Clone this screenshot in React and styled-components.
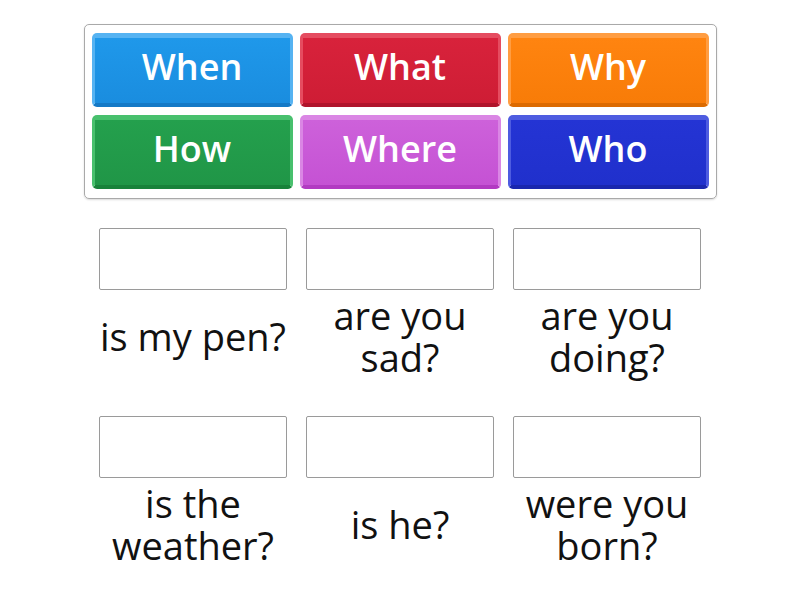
import React from "react";
import styled, { createGlobalStyle } from "styled-components";

const Global = createGlobalStyle`
  html, body { margin: 0; padding: 0; background: #fff; }
  body { font-family: "Open Sans", "Noto Sans", sans-serif; }
`;

const Page = styled.div`
  width: 800px;
  height: 600px;
  display: flex;
  flex-direction: column;
  align-items: center;
  padding-top: 24px;
  box-sizing: border-box;
`;

const Bank = styled.div`
  width: 633px;
  box-sizing: border-box;
  border: 1px solid #a9a9a9;
  border-radius: 5px;
  box-shadow: 0 1px 2px rgba(0, 0, 0, 0.15);
  padding: 8px 8px 9px 7px;
  display: grid;
  grid-template-columns: repeat(3, 201px);
  grid-auto-rows: 74px;
  column-gap: 7px;
  row-gap: 8px;
`;

const Tile = styled.div`
  box-sizing: border-box;
  border-radius: 5px;
  border: 3px solid ${(p) => p.$light};
  border-top-width: 5px;
  border-bottom: 4px solid ${(p) => p.$dark};
  background: linear-gradient(${(p) => p.$base}, ${(p) => p.$dark2});
  color: #fff;
  font-weight: 600;
  font-size: 36px;
  line-height: 40px;
  display: flex;
  align-items: center;
  justify-content: center;
  padding-bottom: 8px;
`;

const Targets = styled.div`
  margin-top: 29px;
  display: grid;
  grid-template-columns: repeat(3, 188px);
  column-gap: 19px;
  row-gap: 30px;
`;

const Cell = styled.div`
  display: flex;
  flex-direction: column;
  align-items: center;
`;

const Drop = styled.div`
  width: 188px;
  height: 62px;
  box-sizing: border-box;
  border: 1px solid #9a9a9a;
  border-radius: 2px;
  background: #fff;
`;

const Label = styled.div`
  height: 96px;
  width: 230px;
  box-sizing: border-box;
  padding-bottom: 4px;
  display: flex;
  align-items: center;
  justify-content: center;
  text-align: center;
  font-size: 38px;
  line-height: 42px;
  color: #111;
`;

const tiles = [
  { t: "When", base: "#1f98ea", light: "#56b3f2", dark: "#1479c6", dark2: "#1a8ddf" },
  { t: "What", base: "#d8223b", light: "#e54c60", dark: "#b0142b", dark2: "#ce1d35" },
  { t: "Why", base: "#ff8410", light: "#ff9d42", dark: "#dc6a00", dark2: "#f87c08" },
  { t: "How", base: "#24a04d", light: "#48c06d", dark: "#18823a", dark2: "#209647" },
  { t: "Where", base: "#cd61da", light: "#da86e4", dark: "#b23ac2", dark2: "#c552d4" },
  { t: "Who", base: "#2434d4", light: "#4e5ce0", dark: "#1a27ae", dark2: "#2030cc" },
];

const labels = [
  "is my pen?",
  "are you\nsad?",
  "are you\ndoing?",
  "is the\nweather?",
  "is he?",
  "were you\nborn?",
];

export default function App() {
  return (
    <>
      <Global />
      <Page>
        <Bank>
          {tiles.map((x) => (
            <Tile key={x.t} $base={x.base} $light={x.light} $dark={x.dark} $dark2={x.dark2}>
              {x.t}
            </Tile>
          ))}
        </Bank>
        <Targets>
          {labels.map((l, i) => (
            <Cell key={i}>
              <Drop />
              <Label>
                <span>
                  {l.split("\n").map((s, j) => (
                    <React.Fragment key={j}>
                      {j > 0 && <br />}
                      {s}
                    </React.Fragment>
                  ))}
                </span>
              </Label>
            </Cell>
          ))}
        </Targets>
      </Page>
    </>
  );
}
